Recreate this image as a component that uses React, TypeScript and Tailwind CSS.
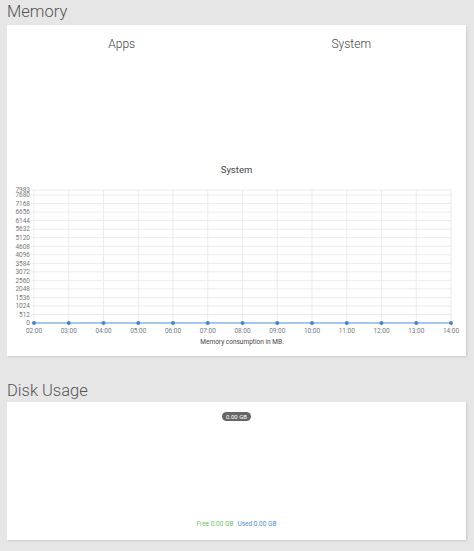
import React from "react";

const yTicks = [7680, 7168, 6656, 6144, 5632, 5120, 4608, 4096, 3584, 3072, 2560, 2048, 1536, 1024, 512, 0];
const hours = ["02:00", "03:00", "04:00", "05:00", "06:00", "07:00", "08:00", "09:00", "10:00", "11:00", "12:00", "13:00", "14:00"];

function Chart() {
  const x0 = 27;
  const x1 = 444;
  const yZero = 167;
  const yTop = 34;
  const max = 7983;
  const yOf = (v: number) => yZero - (v / max) * (yZero - yTop);
  const step = (x1 - x0) / (hours.length - 1);
  return (
    <svg width="459" height="200" viewBox="0 0 459 200" className="block" style={{ fontFamily: "Roboto, 'Liberation Sans', sans-serif" }}>
      <text x="229.5" y="17" textAnchor="middle" fontSize="9.5" fill="#444">System</text>
      {[max, ...yTicks].map((v) => (
        <g key={v}>
          <line x1={x0 - 3} x2={x1} y1={yOf(v)} y2={yOf(v)} stroke="#ebebeb" strokeWidth="1" />
          <text x="23" y={yOf(v) + 2.3} textAnchor="end" fontSize="6.5" fill="#777">{v}</text>
        </g>
      ))}
      {hours.map((h, i) => (
        <g key={h}>
          <line x1={x0 + i * step} x2={x0 + i * step} y1={yTop} y2={yZero + 3} stroke="#ebebeb" strokeWidth="1" />
          <text x={x0 + i * step} y="176.5" textAnchor="middle" fontSize="6.5" fill="#777">{h}</text>
        </g>
      ))}
      <line x1={x0} x2={x1} y1={yZero} y2={yZero} stroke="#5b9bd5" strokeWidth="1.2" />
      {hours.map((h, i) => (
        <circle key={h} cx={x0 + i * step} cy={yZero} r="2" fill="#4a86c5" />
      ))}
      <text x="235" y="187.5" textAnchor="middle" fontSize="6.5" fill="#444">Memory consumption in MB.</text>
    </svg>
  );
}

export default function App() {
  return (
    <div
      className="min-h-[551px] w-[474px] bg-[#e6e6e6] pl-[7px] pr-[8px] text-[#555]"
      style={{ fontFamily: "Roboto, 'Liberation Sans', sans-serif" }}
    >
      <h2 className="h-[25px] pt-[1px] text-[16.5px] font-light leading-[22px] text-[#555]">Memory</h2>
      <div className="h-[331px] bg-white shadow-[1px_1px_2px_rgba(0,0,0,0.12)]">
        <div className="grid h-[131px] grid-cols-2 pt-[10px]">
          <div className="text-center text-[12px] font-light leading-[18px] text-[#444]">Apps</div>
          <div className="text-center text-[12px] font-light leading-[18px] text-[#444]">System</div>
        </div>
        <Chart />
      </div>
      <h2 className="mt-[24px] h-[22px] text-[16.5px] font-light leading-[22px] text-[#555]">Disk Usage</h2>
      <div className="flex h-[138px] flex-col items-center bg-white shadow-[1px_1px_2px_rgba(0,0,0,0.12)]">
        <div className="mt-[10px] rounded-full bg-[#666] px-[4px] text-[6px] leading-[9px] text-white">0.00 GB</div>
        <div className="mt-auto mb-[11px] flex gap-[4px] text-[6.5px] leading-[9px]">
          <span className="text-[#6cbf6c]">Free 0.00 GB</span>
          <span className="text-[#4a90d9]">Used 0.00 GB</span>
        </div>
      </div>
    </div>
  );
}
